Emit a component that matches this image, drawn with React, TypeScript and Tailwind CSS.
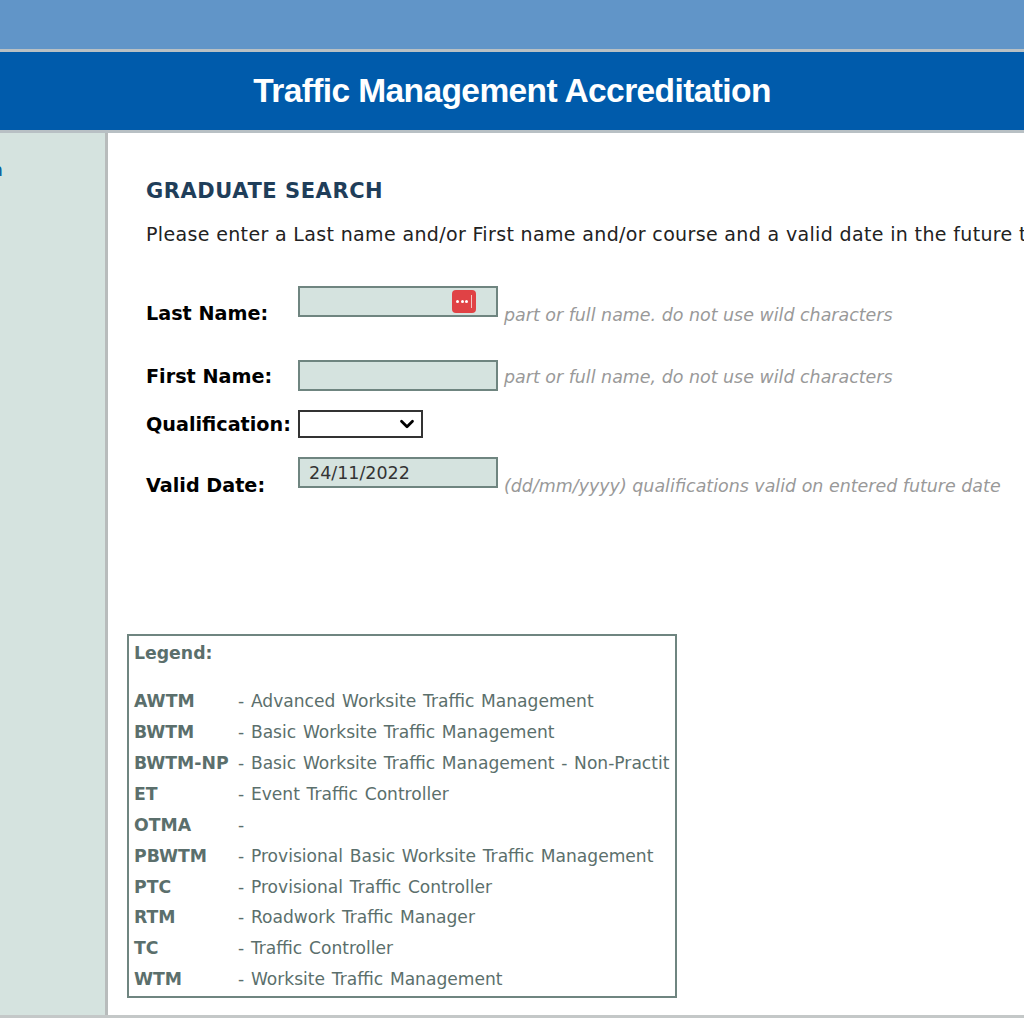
import React from "react";
import { ChevronDown } from "lucide-react";

const rows: [string, string][] = [
  ["AWTM", "- Advanced Worksite Traffic Management"],
  ["BWTM", "- Basic Worksite Traffic Management"],
  ["BWTM-NP", "- Basic Worksite Traffic Management - Non-Practit"],
  ["ET", "- Event Traffic Controller"],
  ["OTMA", "-"],
  ["PBWTM", "- Provisional Basic Worksite Traffic Management"],
  ["PTC", "- Provisional Traffic Controller"],
  ["RTM", "- Roadwork Traffic Manager"],
  ["TC", "- Traffic Controller"],
  ["WTM", "- Worksite Traffic Management"],
];

const hint = "text-[17.45px] italic text-[#999999] ml-[6px] whitespace-nowrap";
const label = "font-bold text-[19.2px] text-black whitespace-nowrap";
const input = "w-[200px] h-[31px] bg-[#d5e3df] border-2 border-[#6f8580] shrink-0";

function Row({ name, lab, children, mb }: { name: string; lab: string; children: React.ReactNode; mb: string }) {
  return <div className={`flex items-start ${mb}`}>
    <div className={`${label} w-[152px] ${lab}`}>{name}</div>
    {children}
  </div>;
}

export default function App() {
  return (
    <div className="w-[1024px] h-[1024px] overflow-hidden bg-white flex flex-col [font-family:'DejaVu_Sans',sans-serif]">
      <div className="h-[49px] bg-[#6195c8] shrink-0" />
      <div className="h-[84px] shrink-0 bg-[#005bab] border-t-[3px] border-b-[3px] border-[#b8c0c4] flex items-center justify-center">
        <h1 className="text-white font-bold text-[33.5px] tracking-[-0.6px] [font-family:'Liberation_Sans',sans-serif]">Traffic Management Accreditation</h1>
      </div>
      <div className="flex h-[885px] shrink-0 border-b-[3px] border-[#c4c8c8]">
        <div className="w-[108px] shrink-0 bg-[#d5e3df] border-r-[3px] border-[#b8bcbc] overflow-hidden relative">
          <div className="absolute right-[102px] top-[24px] text-[18px] text-[#00609c] leading-[26px]">n</div>
        </div>
        <div className="flex-1 min-w-0 pl-[38px] pt-[45px] overflow-hidden">
          <h2 className="font-bold text-[21px] leading-[26px] text-[#1f3e5a] tracking-[0.55px] whitespace-nowrap">GRADUATE SEARCH</h2>
          <p className="mt-[17px] text-[19px] tracking-[0.35px] leading-[26px] text-[#222] whitespace-nowrap">Please enter a Last name and/or First name and/or course and a valid date in the future to search</p>
          <div className="mt-[39px]">
            <Row name="Last Name:" lab="mt-[14px]" mb="mb-[31px]">
              <div className={`${input} relative`}>
                <div className="absolute right-[20px] top-[2px] w-[24px] h-[23px] rounded-[4px] bg-[#e04245] flex items-center justify-center gap-[1.5px]">
                  <span className="w-[3px] h-[3px] rounded-full bg-white" />
                  <span className="w-[3px] h-[3px] rounded-full bg-white" />
                  <span className="w-[3px] h-[3px] rounded-full bg-white" />
                  <span className="w-[1px] h-[13px] bg-[#f4c4c4] ml-[1px]" />
                </div>
              </div>
              <span className={`${hint} mt-[16px]`}>part or full name. do not use wild characters</span>
            </Row>
            <Row name="First Name:" lab="mt-[3px]" mb="mb-[18px]">
              <div className={input} />
              <span className={`${hint} mt-[4px]`}>part or full name, do not use wild characters</span>
            </Row>
            <Row name="Qualification:" lab="mt-[1px]" mb="mb-[18px]">
              <div className="relative w-[125px] h-[28px]">
                <select className="w-full h-full appearance-none bg-white border-2 border-[#333] text-[16px] rounded-none" />
                <ChevronDown className="absolute right-[5px] top-[3px] w-[22px] h-[22px] text-black pointer-events-none" strokeWidth={3} />
              </div>
            </Row>
            <Row name="Valid Date:" lab="mt-[15px]" mb="">
              <div className={`${input} text-[17.5px] leading-[29px] pl-[9px] text-[#333]`}>24/11/2022</div>
              <span className={`${hint} mt-[16px]`}>(dd/mm/yyyy) qualifications valid on entered future date</span>
            </Row>
          </div>
          <div className="mt-[133px] -ml-[19px] w-[550px] h-[364px] border-2 border-[#6f8580] pl-[5px] pt-[4px] overflow-hidden text-[#5b6f6c] text-[17.1px] [word-spacing:1.3px]">
            <div className="font-bold text-[17.3px] leading-[26px] mb-[22px]">Legend:</div>
            {rows.map(([a, b]) => (
              <div key={a} className="flex h-[30.9px] leading-[26px] whitespace-nowrap">
                <b className="w-[104px] shrink-0 text-[17.3px]">{a}</b>
                <span>{b}</span>
              </div>
            ))}
          </div>
        </div>
      </div>
    </div>
  );
}
